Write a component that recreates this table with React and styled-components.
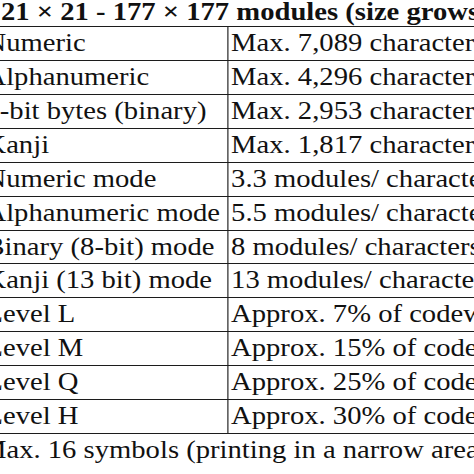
import React from "react";
import styled, { createGlobalStyle } from "styled-components";

const GlobalStyle = createGlobalStyle`
  html, body {
    margin: 0;
    padding: 0;
    background: #fff;
    overflow: hidden;
  }
  body {
    width: 474px;
    height: 474px;
    font-family: "Liberation Serif", "Times New Roman", serif;
    color: #111;
  }
`;

// the source figure is stretched sideways, so the whole table is scaled on x
const Sheet = styled.div`
  width: 640px;
  margin-left: -20px;
  transform: scaleX(1.145);
  transform-origin: 0 0;
  font-size: 25px;
  white-space: nowrap;
`;

const Caption = styled.div`
  height: 26.25px;
  line-height: 24px;
  padding-left: ${(p) => p.$indent}px;
  font-weight: ${(p) => (p.$bold ? 700 : 400)};
  border-bottom: ${(p) => (p.$ruled ? "1.5px solid #1c1c1c" : "none")};
  ${(p) => p.$tall && "height: 32.9px; line-height: 32.9px;"}
`;

const Row = styled.div`
  display: flex;
  height: 32.9px;
  border-bottom: 1.5px solid #1c1c1c;
`;

const Label = styled.div`
  box-sizing: border-box;
  flex: 0 0 216.6px;
  padding-left: 4.8px;
  line-height: 32.9px;
  border-right: 1.75px solid #1c1c1c;
  overflow: hidden;
`;

const Value = styled.div`
  flex: 1;
  padding-left: 2.7px;
  line-height: 32.9px;
`;

const rows = [
  ["Numeric", "Max. 7,089 characters"],
  ["Alphanumeric", "Max. 4,296 characters"],
  ["8-bit bytes (binary)", "Max. 2,953 characters"],
  ["Kanji", "Max. 1,817 characters"],
  ["Numeric mode", "3.3 modules/ character"],
  ["Alphanumeric mode", "5.5 modules/ character"],
  ["Binary (8-bit) mode", "8 modules/ characters"],
  ["Kanji (13 bit) mode", "13 modules/ character"],
  ["Level L", "Approx. 7% of codewords"],
  ["Level M", "Approx. 15% of codewords"],
  ["Level Q", "Approx. 25% of codewords"],
  ["Level H", "Approx. 30% of codewords"],
];

const App = () => {
  return (
    <>
      <GlobalStyle />
      <Sheet>
        <Caption $bold $ruled $indent={18.3}>
          21 × 21 - 177 × 177 modules (size grows with version)
        </Caption>
        {rows.map(([label, value]) => (
          <Row key={label}>
            <Label>{label}</Label>
            <Value>{value}</Value>
          </Row>
        ))}
        <Caption $tall $indent={0.9}>
          Max. 16 symbols (printing in a narrow area)
        </Caption>
      </Sheet>
    </>
  );
};

export default App;
